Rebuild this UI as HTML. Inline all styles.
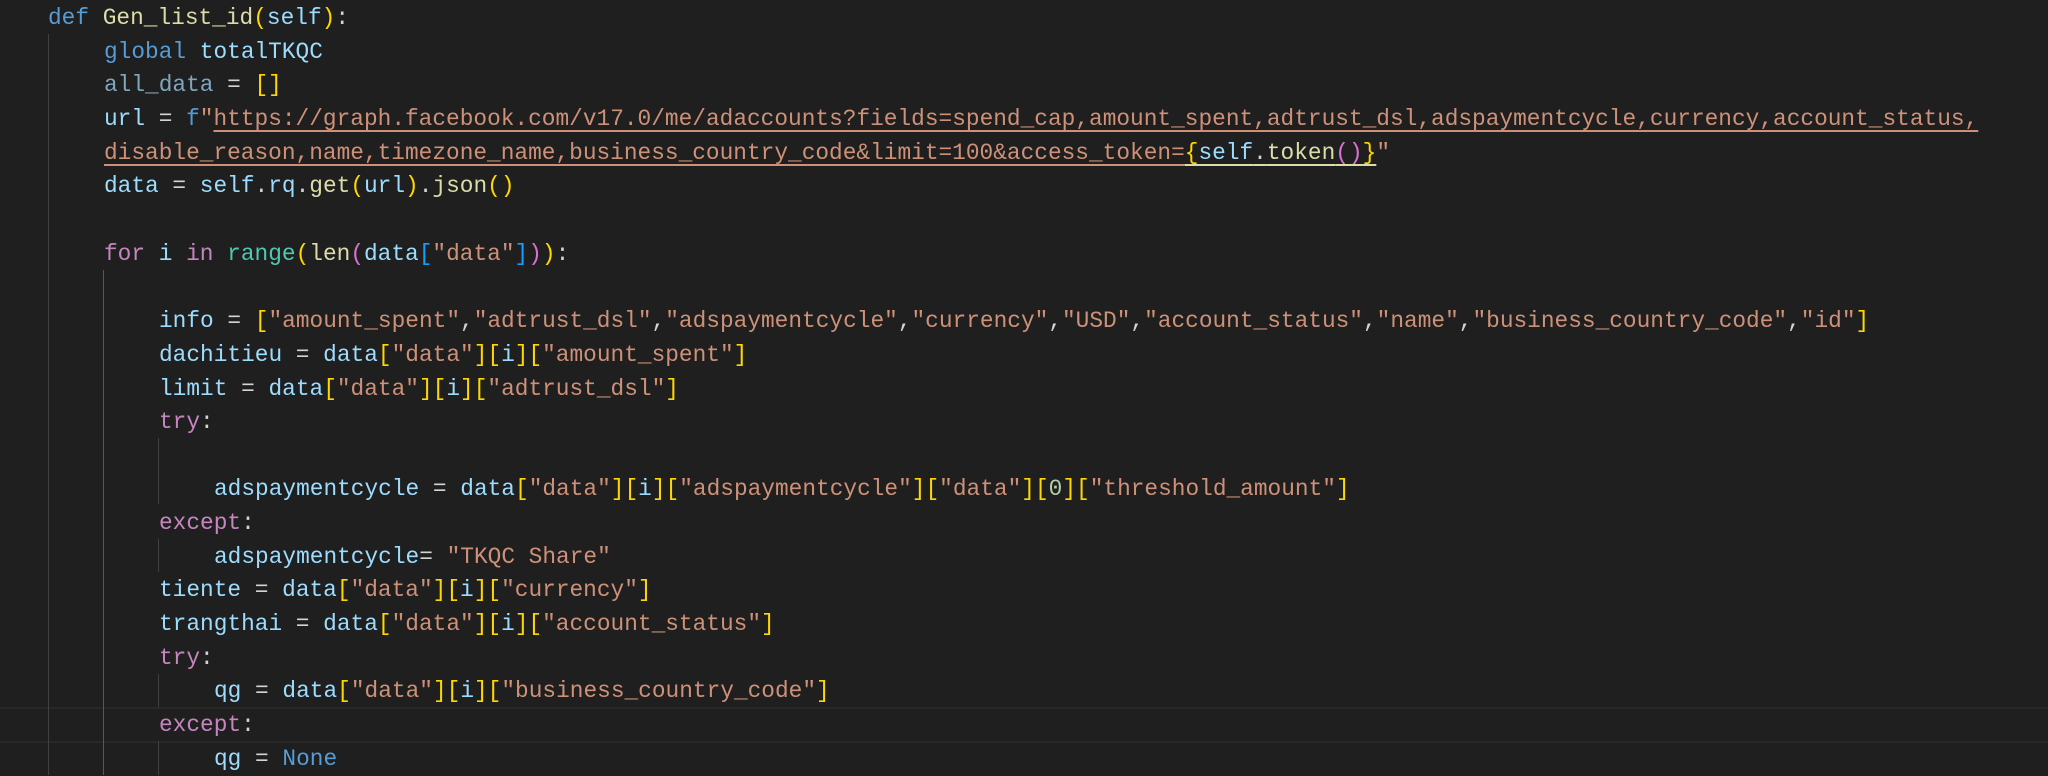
<!DOCTYPE html>
<html><head><meta charset="utf-8"><style>
html,body{margin:0;padding:0;background:#1f1f1f;width:2048px;height:775px;overflow:hidden}
.l{position:absolute;left:0;height:34px;line-height:34px;white-space:pre;font-family:"Liberation Mono",monospace;font-size:22.8px;color:#d4d4d4;letter-spacing:0}
.g{position:absolute;width:1px;background:#404040}
.k{color:#569cd6}.c{color:#c586c0}.f{color:#dcdcaa}.v{color:#9cdcfe}.s{color:#ce9178}.t{color:#4ec9b0}.n{color:#b5cea8}
.b1{color:#ffd700}.b2{color:#da70d6}.b3{color:#179fff}.dim{color:#7fa6bd}
.u{text-decoration:underline;text-decoration-color:#ce9178;text-underline-offset:5px}
.uy{text-decoration:underline;text-decoration-color:#dcdcaa;text-underline-offset:5px}
.hl{position:absolute;left:0;width:2048px;height:32px;border-top:2px solid #282828;border-bottom:2px solid #282828}
</style></head><body>
<div class="hl" style="top:707px"></div>
<div class="g" style="left:48px;top:34px;height:741px"></div>
<div class="g" style="left:103px;top:270px;height:505px;background:#585858"></div>
<div class="g" style="left:158px;top:438px;height:66px"></div>
<div class="g" style="left:158px;top:539px;height:33px"></div>
<div class="g" style="left:158px;top:674px;height:33px"></div>
<div class="g" style="left:158px;top:741px;height:34px"></div>

<div class="l" style="top:1px;left:48px"><span class="k">def</span> <span class="f">Gen_list_id</span><span class="b1">(</span><span class="v">self</span><span class="b1">)</span>:</div>
<div class="l" style="top:35px;left:104px"><span class="k">global</span> <span class="v">totalTKQC</span></div>
<div class="l" style="top:68px;left:104px"><span class="dim">all_data</span> = <span class="b1">[]</span></div>
<div class="l" style="top:102px;left:104px"><span class="v">url</span> = <span class="k">f</span><span class="s">"<span class="u">https://graph.facebook.com/v17.0/me/adaccounts?fields=spend_cap,amount_spent,adtrust_dsl,adspaymentcycle,currency,account_status,</span></span></div>
<div class="l" style="top:136px;left:104px"><span class="s u">disable_reason,name,timezone_name,business_country_code&amp;limit=100&amp;access_token=</span><span class="uy"><span class="b1">{</span><span class="v">self</span>.<span class="f">token</span><span class="b2">()</span><span class="b1">}</span></span><span class="s">"</span></div>
<div class="l" style="top:169px;left:104px"><span class="v">data</span> = <span class="v">self</span>.<span class="v">rq</span>.<span class="f">get</span><span class="b1">(</span><span class="v">url</span><span class="b1">)</span>.<span class="f">json</span><span class="b1">()</span></div>
<div class="l" style="top:237px;left:104px"><span class="c">for</span> <span class="v">i</span> <span class="c">in</span> <span class="t">range</span><span class="b1">(</span><span class="f">len</span><span class="b2">(</span><span class="v">data</span><span class="b3">[</span><span class="s">"data"</span><span class="b3">]</span><span class="b2">)</span><span class="b1">)</span>:</div>
<div class="l" style="top:304px;left:159px"><span class="v">info</span> = <span class="b1">[</span><span class="s">"amount_spent"</span>,<span class="s">"adtrust_dsl"</span>,<span class="s">"adspaymentcycle"</span>,<span class="s">"currency"</span>,<span class="s">"USD"</span>,<span class="s">"account_status"</span>,<span class="s">"name"</span>,<span class="s">"business_country_code"</span>,<span class="s">"id"</span><span class="b1">]</span></div>
<div class="l" style="top:338px;left:159px"><span class="v">dachitieu</span> = <span class="v">data</span><span class="b1">[</span><span class="s">"data"</span><span class="b1">][</span><span class="v">i</span><span class="b1">][</span><span class="s">"amount_spent"</span><span class="b1">]</span></div>
<div class="l" style="top:372px;left:159px"><span class="v">limit</span> = <span class="v">data</span><span class="b1">[</span><span class="s">"data"</span><span class="b1">][</span><span class="v">i</span><span class="b1">][</span><span class="s">"adtrust_dsl"</span><span class="b1">]</span></div>
<div class="l" style="top:405px;left:159px"><span class="c">try</span>:</div>
<div class="l" style="top:472px;left:214px"><span class="v">adspaymentcycle</span> = <span class="v">data</span><span class="b1">[</span><span class="s">"data"</span><span class="b1">][</span><span class="v">i</span><span class="b1">][</span><span class="s">"adspaymentcycle"</span><span class="b1">][</span><span class="s">"data"</span><span class="b1">][</span><span class="n">0</span><span class="b1">][</span><span class="s">"threshold_amount"</span><span class="b1">]</span></div>
<div class="l" style="top:506px;left:159px"><span class="c">except</span>:</div>
<div class="l" style="top:540px;left:214px"><span class="v">adspaymentcycle</span>= <span class="s">"TKQC Share"</span></div>
<div class="l" style="top:573px;left:159px"><span class="v">tiente</span> = <span class="v">data</span><span class="b1">[</span><span class="s">"data"</span><span class="b1">][</span><span class="v">i</span><span class="b1">][</span><span class="s">"currency"</span><span class="b1">]</span></div>
<div class="l" style="top:607px;left:159px"><span class="v">trangthai</span> = <span class="v">data</span><span class="b1">[</span><span class="s">"data"</span><span class="b1">][</span><span class="v">i</span><span class="b1">][</span><span class="s">"account_status"</span><span class="b1">]</span></div>
<div class="l" style="top:641px;left:159px"><span class="c">try</span>:</div>
<div class="l" style="top:674px;left:214px"><span class="v">qg</span> = <span class="v">data</span><span class="b1">[</span><span class="s">"data"</span><span class="b1">][</span><span class="v">i</span><span class="b1">][</span><span class="s">"business_country_code"</span><span class="b1">]</span></div>
<div class="l" style="top:708px;left:159px"><span class="c">except</span>:</div>
<div class="l" style="top:742px;left:214px"><span class="v">qg</span> = <span class="k">None</span></div>
</body></html>
